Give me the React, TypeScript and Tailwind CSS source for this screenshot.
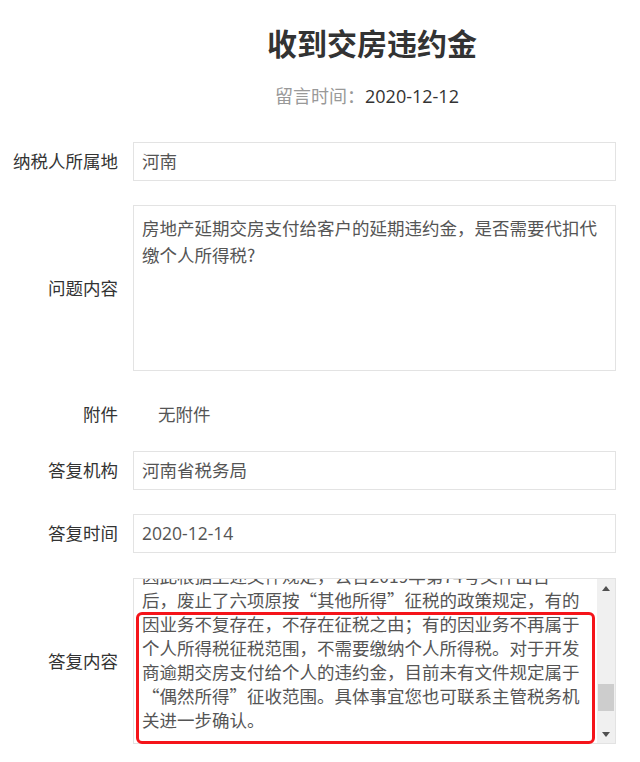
const cjk = "font-['Noto_Sans_CJK_SC',sans-serif]";

function Label({ children }: { children: React.ReactNode }) {
  return <div className="w-[118px] shrink-0 text-right text-[#333]">{children}</div>;
}

function FieldRow({ label, value, latin }: { label: string; value: string; latin?: boolean }) {
  return (
    <div className="flex items-center gap-[15px]">
      <Label>{label}</Label>
      <div className="flex h-[39px] w-[483px] items-center border border-[#e3e3e3] px-[8px] text-[#555]">
        <span className={latin ? "font-['Open_Sans','Noto_Sans_CJK_SC',sans-serif]" : ""}>{value}</span>
      </div>
    </div>
  );
}

const answer = [
  "因此根据上述文件规定，公告2019年第74号文件出台",
  "后，废止了六项原按“其他所得”征税的政策规定，有的",
  "因业务不复存在，不存在征税之由；有的因业务不再属于",
  "个人所得税征税范围，不需要缴纳个人所得税。对于开发",
  "商逾期交房支付给个人的违约金，目前未有文件规定属于",
  "“偶然所得”征收范围。具体事宜您也可联系主管税务机",
  "关进一步确认。",
];

export default function App() {
  return (
    <div className={`${cjk} min-h-[762px] w-[640px] bg-white text-[17.5px]`}>
      {/* Header */}
      <div className="flex flex-col items-center pl-[104px] pt-[22px]">
        <h1 className="text-[30px] font-bold leading-[40px] text-[#333]">收到交房违约金</h1>
        <div className="mt-[20px] mr-[10px] text-[18px] leading-[26px]">
          <span className="text-[#999]">留言时间：</span>
          <span className="font-['Open_Sans',sans-serif] text-[#333]">2020-12-12</span>
        </div>
      </div>

      <div className="mt-[33px] flex flex-col">
        <FieldRow label="纳税人所属地" value="河南" />

        {/* Question */}
        <div className="mt-[24px] flex items-center gap-[15px]">
          <Label>问题内容</Label>
          <div className="h-[166px] w-[483px] border border-[#e3e3e3] px-[8px] pt-[8px] leading-[27px] text-[#555]">
            <div className="whitespace-nowrap">房地产延期交房支付给客户的延期违约金，是否需要代扣代</div>
            <div className="whitespace-nowrap">缴个人所得税?</div>
          </div>
        </div>

        {/* Attachment */}
        <div className="mt-[24px] flex h-[38px] items-center gap-[15px]">
          <Label>附件</Label>
          <div className="pl-[25px] text-[#555]">无附件</div>
        </div>

        <div className="mt-[18px]">
          <FieldRow label="答复机构" value="河南省税务局" />
        </div>
        <div className="mt-[24px]">
          <FieldRow label="答复时间" value="2020-12-14" latin />
        </div>

        {/* Answer */}
        <div className="mt-[25px] flex items-center gap-[15px]">
          <Label>答复内容</Label>
          <div className="relative flex h-[166px] w-[483px] border border-[#e3e3e3]">
            <div className="flex-1 overflow-hidden px-[8px] leading-[24px] text-[#555]">
              <div className="-mt-[15px]">
                {answer.map((l, i) => (
                  <div key={i} className="whitespace-nowrap">{l}</div>
                ))}
              </div>
            </div>
            {/* scrollbar */}
            <div className="flex w-[18px] flex-col items-center bg-[#f0f0f0]">
              <div className="flex h-[18px] w-full items-center justify-center">
                <svg width="8" height="5" viewBox="0 0 8 5"><path d="M4 0L8 5H0z" fill="#505050" /></svg>
              </div>
              <div className="mt-[87px] h-[27px] w-[16px] bg-[#cdcdcd]" />
              <div className="mt-auto flex h-[18px] w-full items-center justify-center">
                <svg width="8" height="5" viewBox="0 0 8 5"><path d="M0 0H8L4 5z" fill="#505050" /></svg>
              </div>
            </div>
            {/* highlight annotation */}
            <div className="pointer-events-none absolute left-[2px] top-[33px] h-[132px] w-[459px] rounded-[6px] border-[3px] border-[#f5141a]" />
          </div>
        </div>
      </div>
    </div>
  );
}
